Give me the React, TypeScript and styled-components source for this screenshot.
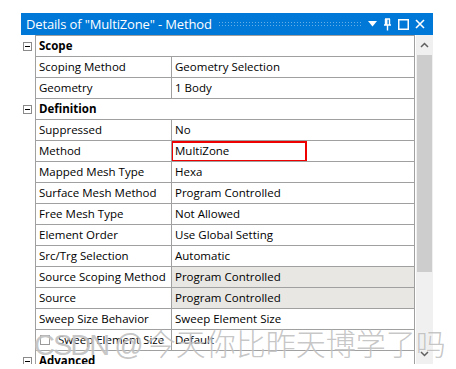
import styled, { createGlobalStyle } from "styled-components";

const GlobalStyle = createGlobalStyle`
  html, body {
    margin: 0;
    padding: 0;
    background: #ffffff;
  }
  #root {
    height: 369px;
    overflow: hidden;
    position: relative;
  }
`;

const Page = styled.div`
  padding: 13px 0 0 21px;
  font-family: "Open Sans", "Noto Sans", "Liberation Sans", sans-serif;
`;

const Panel = styled.div`
  width: 412px;
`;

const TitleBar = styled.div`
  height: 22px;
  background: #0078d7;
  display: flex;
  align-items: center;
  padding: 0 8px 0 5px;
  color: #ffffff;
`;

const Title = styled.span`
  font-size: 13px;
  white-space: nowrap;
  letter-spacing: -0.15px;
`;

const Dots = styled.div`
  flex: 1;
  height: 6px;
  margin: 0 5px 0 6px;
  background-image: radial-gradient(circle, rgba(255, 255, 255, 0.4) 0.6px, transparent 0.8px);
  background-size: 3px 3px;
`;

const TitleIcons = styled.div`
  display: flex;
  align-items: center;
  gap: 6px;
`;

const Body = styled.div`
  display: flex;
  height: 329px;
  overflow: hidden;
`;

const Grid = styled.div`
  width: 395px;
  background: #ffffff;
`;

const TopRule = styled.div`
  margin-left: 14px;
  height: 1px;
  background: #a0a0a0;
`;

const Row = styled.div`
  display: grid;
  grid-template-columns: 14px 137px 1fr;
  height: 21px;
  font-size: 11.5px;
  line-height: 14px;
  color: #000000;
`;

const Gutter = styled.div`
  display: flex;
  align-items: center;
  padding-left: 2px;
`;

const Toggle = styled.div`
  width: 7px;
  height: 7px;
  border: 1px solid #8a8a8a;
  position: relative;
  background: #ffffff;

  &::after {
    content: "";
    position: absolute;
    left: 1px;
    right: 1px;
    top: 3px;
    height: 1px;
    background: #000000;
  }
`;

const Cell = styled.div<{ $shaded?: boolean }>`
  box-sizing: border-box;
  display: flex;
  align-items: center;
  padding: 0 0 1px 3px;
  border-bottom: 1px solid #a0a0a0;
  border-right: 1px solid #a0a0a0;
  white-space: nowrap;
  overflow: hidden;
  position: relative;
  background: ${(p) => (p.$shaded ? "#e8e7e4" : "#ffffff")};
`;

const NameCell = styled(Cell)`
  border-left: 1px solid #a0a0a0;
`;

const CategoryCell = styled(NameCell)`
  grid-column: 2 / span 2;
  font-weight: 700;
`;

const Check = styled.span`
  width: 8px;
  height: 8px;
  border: 1px solid #9a9a9a;
  margin: 0 8px 0 1px;
  flex-shrink: 0;
`;

const Highlight = styled.div`
  position: absolute;
  left: -1px;
  top: 0;
  width: 136px;
  height: 21px;
  box-sizing: border-box;
  border: 2px solid #ee0000;
`;

const ScrollBar = styled.div`
  width: 17px;
  margin-left: 1px;
  background: #f0f0f0;
  display: flex;
  flex-direction: column;
  align-items: center;
`;

const ScrollButton = styled.div`
  height: 20px;
  width: 100%;
  display: flex;
  align-items: center;
  justify-content: center;
`;

const Thumb = styled.div`
  width: 15px;
  height: 217px;
  background: #cdcdcd;
`;

const Track = styled.div`
  flex: 1;
`;

const Watermark = styled.div`
  position: absolute;
  left: 34px;
  top: 324px;
  white-space: nowrap;
  color: rgba(150, 150, 150, 0.55);
  text-shadow: 0 0 1px rgba(255, 255, 255, 0.8);
  pointer-events: none;
  line-height: 36px;
`;

const MarkLatin = styled.span`
  font-family: "Liberation Sans", sans-serif;
  font-size: 29px;
  letter-spacing: -2px;
`;

const MarkCjk = styled.span`
  font-family: "Noto Sans CJK SC", sans-serif;
  font-size: 30px;
  font-weight: 300;
  margin-left: 4px;
`;

type Item =
  | { kind: "cat"; name: string }
  | { kind: "prop"; name: string; value: string; shaded?: boolean; marked?: boolean; check?: boolean };

const items: Item[] = [
  { kind: "cat", name: "Scope" },
  { kind: "prop", name: "Scoping Method", value: "Geometry Selection" },
  { kind: "prop", name: "Geometry", value: "1 Body" },
  { kind: "cat", name: "Definition" },
  { kind: "prop", name: "Suppressed", value: "No" },
  { kind: "prop", name: "Method", value: "MultiZone", marked: true },
  { kind: "prop", name: "Mapped Mesh Type", value: "Hexa" },
  { kind: "prop", name: "Surface Mesh Method", value: "Program Controlled" },
  { kind: "prop", name: "Free Mesh Type", value: "Not Allowed" },
  { kind: "prop", name: "Element Order", value: "Use Global Setting" },
  { kind: "prop", name: "Src/Trg Selection", value: "Automatic" },
  { kind: "prop", name: "Source Scoping Method", value: "Program Controlled", shaded: true },
  { kind: "prop", name: "Source", value: "Program Controlled", shaded: true },
  { kind: "prop", name: "Sweep Size Behavior", value: "Sweep Element Size" },
  { kind: "prop", name: "Sweep Element Size", value: "Default", check: true },
  { kind: "cat", name: "Advanced" },
];

function PinIcon() {
  return (
    <svg width="9" height="13" viewBox="0 0 9 13">
      <path d="M2 1h5M2.5 1v6M6.5 1v6M1 7h7M4.5 7v5.5" stroke="#fff" strokeWidth="1.4" fill="none" />
      <rect x="2.5" y="1" width="2" height="6" fill="#fff" />
    </svg>
  );
}

export default function App() {
  return (
    <Page>
      <GlobalStyle />
      <Panel>
        <TitleBar>
          <Title>Details of "MultiZone" - Method</Title>
          <Dots />
          <TitleIcons>
            <svg width="9" height="6" viewBox="0 0 9 6">
              <path d="M0 0h9L4.5 5.5z" fill="#fff" />
            </svg>
            <PinIcon />
            <svg width="11" height="11" viewBox="0 0 11 11">
              <rect x="0.75" y="0.75" width="9.5" height="9.5" stroke="#fff" strokeWidth="1.5" fill="none" />
            </svg>
            <svg width="10" height="10" viewBox="0 0 10 10">
              <path d="M1 1l8 8M9 1l-8 8" stroke="#fff" strokeWidth="1.6" />
            </svg>
          </TitleIcons>
        </TitleBar>
        <Body>
          <Grid>
            <TopRule />
            {items.map((it) =>
              it.kind === "cat" ? (
                <Row key={it.name}>
                  <Gutter>
                    <Toggle />
                  </Gutter>
                  <CategoryCell>{it.name}</CategoryCell>
                </Row>
              ) : (
                <Row key={it.name}>
                  <Gutter />
                  <NameCell>
                    {it.check && <Check />}
                    {it.name}
                  </NameCell>
                  <Cell $shaded={it.shaded}>
                    {it.value}
                    {it.marked && <Highlight />}
                  </Cell>
                </Row>
              )
            )}
          </Grid>
          <ScrollBar>
            <ScrollButton>
              <svg width="9" height="6" viewBox="0 0 9 6">
                <path d="M1 5l3.5-3.5L8 5" stroke="#606060" strokeWidth="1.5" fill="none" />
              </svg>
            </ScrollButton>
            <Thumb />
            <Track />
            <ScrollButton>
              <svg width="9" height="6" viewBox="0 0 9 6">
                <path d="M1 1l3.5 3.5L8 1" stroke="#606060" strokeWidth="1.5" fill="none" />
              </svg>
            </ScrollButton>
          </ScrollBar>
        </Body>
      </Panel>
      <Watermark>
        <MarkLatin>CSDN @</MarkLatin>
        <MarkCjk>今天你比昨天博学了吗</MarkCjk>
      </Watermark>
    </Page>
  );
}
